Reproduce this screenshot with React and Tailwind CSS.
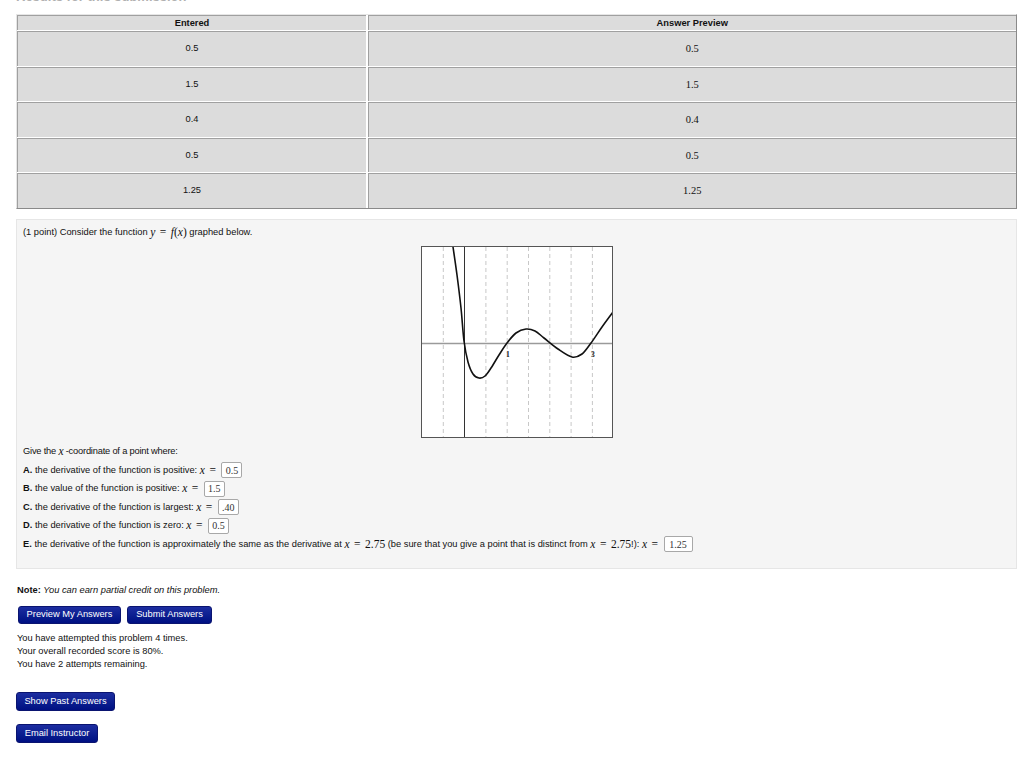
import React from "react";

const pts = [
  [31, 0], [35, 28], [39, 61], [42, 94], [46, 115], [51, 127], [57, 131], [63, 129],
  [69, 121], [77, 108], [85, 96], [94, 86], [104, 82], [113, 84], [122, 91], [136, 102],
  [150, 110], [160, 107], [169, 96], [180, 80], [191, 65],
];

function catmull(p) {
  let d = `M${p[0][0]},${p[0][1]}`;
  for (let i = 0; i < p.length - 1; i++) {
    const p0 = p[i - 1] || p[i];
    const p1 = p[i];
    const p2 = p[i + 1];
    const p3 = p[i + 2] || p2;
    const c1x = p1[0] + (p2[0] - p0[0]) / 6;
    const c1y = p1[1] + (p2[1] - p0[1]) / 6;
    const c2x = p2[0] - (p3[0] - p1[0]) / 6;
    const c2y = p2[1] - (p3[1] - p1[1]) / 6;
    d += ` C${c1x.toFixed(2)},${c1y.toFixed(2)} ${c2x.toFixed(2)},${c2y.toFixed(2)} ${p2[0]},${p2[1]}`;
  }
  return d;
}

function Graph() {
  const grid = [21.3, 63.9, 85.2, 106.5, 127.8, 149.1, 170.4];
  return (
    <div className="w-[192px] h-[192px] border border-[#555] bg-white">
      <svg width="190" height="190" viewBox="0 0 190 190" className="block">
        {grid.map((x) => (
          <line key={x} x1={x} y1="0" x2={x} y2="190" stroke="#c8c8c8" strokeWidth="1" strokeDasharray="4 3" />
        ))}
        <line x1="0" y1="96.5" x2="190" y2="96.5" stroke="#9a9a9a" strokeWidth="1.5" />
        <line x1="42.5" y1="0" x2="42.5" y2="190" stroke="#333" strokeWidth="1" />
        <path d={catmull(pts)} fill="none" stroke="#111" strokeWidth="1.6" />
        <text x="84" y="109.5" fontSize="7.5" fontWeight="bold" fontFamily="Liberation Serif, serif" fill="#222">1</text>
        <text x="169" y="109.5" fontSize="7.5" fontWeight="bold" fontFamily="Liberation Serif, serif" fill="#222">3</text>
      </svg>
    </div>
  );
}

const M = ({ children }) => (
  <span className="font-['Liberation_Serif',serif] italic text-[11.5px]">{children}</span>
);
const Eq = () => (
  <span className="font-['Liberation_Serif',serif] text-[11.5px] mx-[4.5px]">=</span>
);
const Num = ({ children }) => (
  <span className="font-['Liberation_Serif',serif] text-[11.5px]">{children}</span>
);

const Box = ({ children, w }) => (
  <span
    className={`inline-flex items-center justify-center h-[16px] ${w} border border-[#a8a8a8] rounded-[2px] bg-white font-['Liberation_Serif',serif] text-[10px] text-[#333] ml-[1px]`}
  >
    {children}
  </span>
);

const Line = ({ letter, text, children }) => (
  <div className="h-[18.5px] flex items-center whitespace-pre">
    <span className="font-bold">{letter}</span>
    <span> {text}</span>
    {children}
  </div>
);

const Btn = ({ children, w }) => (
  <button
    className={`h-[18px] ${w} rounded-[3px] border border-[#0a1470] bg-linear-to-b from-[#1c2da0] to-[#000f82] text-white text-[9.3px] font-['Liberation_Sans',sans-serif] flex items-center justify-center`}
  >
    {children}
  </button>
);

export default function App() {
  const rows = [
    ["0.5", "0.5"],
    ["1.5", "1.5"],
    ["0.4", "0.4"],
    ["0.5", "0.5"],
    ["1.25", "1.25"],
  ];
  return (
    <div className="w-[1024px] min-h-[772px] bg-white text-[#111] font-['Liberation_Sans',Arial,sans-serif] text-[9.3px] leading-[13px]">
      <div className="h-[14px] overflow-hidden pl-[16px]">
        <div className="-mt-[10px] text-[13px] leading-[14px] font-bold text-[#b0b0b0]">Results for this submission</div>
      </div>

      {/* results table */}
      <div className="ml-[16px] mr-[7px] border-t border-l border-[#e6e6e6] border-r border-b border-r-[#8a8a8a] border-b-[#8a8a8a]">
        <div className="grid grid-cols-[349px_1fr] gap-x-[1.5px] gap-y-[1px]">
          <div className="h-[15px] bg-[#dcdcdc] border-t border-l border-[#a0a0a0] flex items-center justify-center font-bold">Entered</div>
          <div className="h-[15px] bg-[#dcdcdc] border-t border-l border-[#a0a0a0] flex items-center justify-center font-bold">Answer Preview</div>
          {rows.map(([a, b], i) => (
            <React.Fragment key={i}>
              <div className="h-[34.5px] bg-[#dcdcdc] border-t border-l border-[#a0a0a0] flex items-center justify-center">{a}</div>
              <div className="h-[34.5px] bg-[#dcdcdc] border-t border-l border-[#a0a0a0] flex items-center justify-center font-['Liberation_Serif',serif] text-[10.5px]">{b}</div>
            </React.Fragment>
          ))}
        </div>
      </div>

      {/* problem box */}
      <div className="ml-[16px] mr-[7px] mt-[10px] bg-[#f5f5f5] border border-[#e6e6e6] pl-[6px] pr-[6px] pt-[6px] pb-[14.5px]">
        <div className="h-[13px] flex items-center whitespace-pre">
          (1 point) Consider the function <M>y</M><Eq /><M>f</M><Num>(</Num><M>x</M><Num>)</Num> graphed below.
        </div>
        <div className="flex justify-center mt-[7px]">
          <Graph />
        </div>
        <div className="mt-[7.5px] h-[13px] flex items-center whitespace-pre tracking-[-0.2px]">
          Give the <M>x</M> -coordinate of a point where:
        </div>
        <div className="mt-[3px]">
          <Line letter="A." text="the derivative of the function is positive: ">
            <M>x</M><Eq /><Box w="w-[21px]">0.5</Box>
          </Line>
          <Line letter="B." text="the value of the function is positive: ">
            <M>x</M><Eq /><Box w="w-[21px]">1.5</Box>
          </Line>
          <Line letter="C." text="the derivative of the function is largest: ">
            <M>x</M><Eq /><Box w="w-[21px]">.40</Box>
          </Line>
          <Line letter="D." text="the derivative of the function is zero: ">
            <M>x</M><Eq /><Box w="w-[21px]">0.5</Box>
          </Line>
          <div className="h-[18.5px] flex items-center whitespace-pre">
            <span className="font-bold">E.</span>
            <span> the derivative of the function is approximately the same as the derivative at </span>
            <M>x</M><Eq /><Num>2.75</Num>
            <span> (be sure that you give a point that is distinct from </span>
            <M>x</M><Eq /><Num>2.75</Num><span>!): </span>
            <M>x</M><Eq /><Box w="w-[29px]">1.25</Box>
          </div>
        </div>
      </div>

      <div className="pl-[17px] mt-[15px]">
        <div className="h-[13px] flex items-center whitespace-pre">
          <span className="font-bold">Note: </span>
          <span className="italic">You can earn partial credit on this problem.</span>
        </div>
        <div className="flex gap-[6px] mt-[8.5px] ml-[1px]">
          <Btn w="w-[103px]">Preview My Answers</Btn>
          <Btn w="w-[85px]">Submit Answers</Btn>
        </div>
        <div className="mt-[8.5px]">
          <div>You have attempted this problem 4 times.</div>
          <div>Your overall recorded score is 80%.</div>
          <div>You have 2 attempts remaining.</div>
        </div>
      </div>

      <div className="pl-[16px] mt-[20.5px] flex flex-col gap-[13px] items-start">
        <button className="h-[19px] w-[99px] rounded-[3px] border border-[#0a1470] bg-linear-to-b from-[#1c2da0] to-[#000f82] text-white text-[9.3px] flex items-center justify-center">Show Past Answers</button>
        <button className="h-[19px] w-[82px] rounded-[3px] border border-[#0a1470] bg-linear-to-b from-[#1c2da0] to-[#000f82] text-white text-[9.3px] flex items-center justify-center">Email Instructor</button>
      </div>
    </div>
  );
}
